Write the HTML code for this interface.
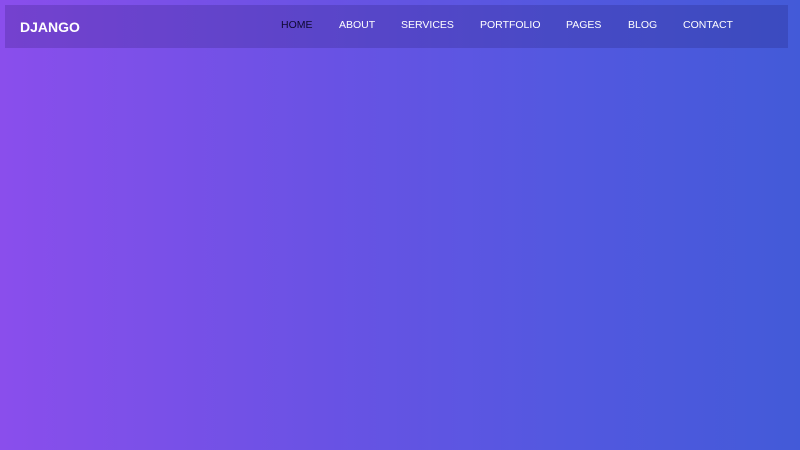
<!DOCTYPE html>
<html><head><style>
html,body{margin:0;padding:0;width:800px;height:450px;overflow:hidden}
body{background:linear-gradient(90deg,#8a4eec 0%,#6a52e4 40%,#5358e0 70%,#435ad8 100%);font-family:"Liberation Sans",sans-serif;position:relative}
.hdr{position:absolute;left:5px;top:5px;width:783px;height:43px;background:rgba(20,10,80,0.18)}
.logo{position:absolute;left:20px;top:19px;color:#fff;font-weight:bold;font-size:14px}
.nav a{position:absolute;top:19px;font-size:10.5px;color:#fff;text-decoration:none}
</style></head><body>
<div class="hdr"></div>
<div class="logo">DJANGO</div>
<div class="nav">
<a style="left:281px;color:#0d0830">HOME</a>
<a style="left:339px">ABOUT</a>
<a style="left:401px">SERVICES</a>
<a style="left:480px">PORTFOLIO</a>
<a style="left:566px">PAGES</a>
<a style="left:628px">BLOG</a>
<a style="left:683px">CONTACT</a>
</div>
</body></html>
